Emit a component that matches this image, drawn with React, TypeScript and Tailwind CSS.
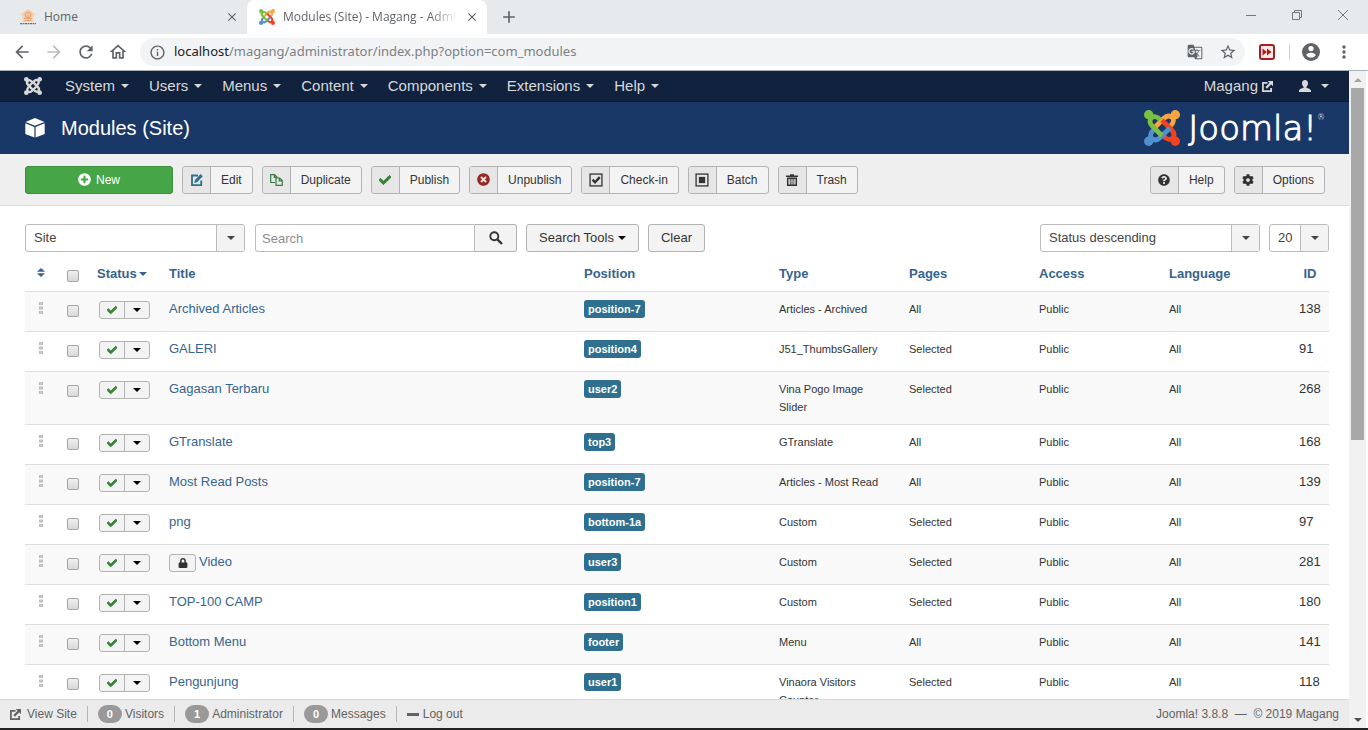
import React from "react";
import {
  MdArrowBack,
  MdArrowForward,
  MdRefresh,
  MdOutlineHome,
  MdInfoOutline,
  MdStarBorder,
  MdClose,
  MdAdd,
  MdMoreVert,
  MdGTranslate,
} from "react-icons/md";
import {
  FaCheck,
  FaPlusCircle,
  FaTimesCircle,
  FaQuestionCircle,
  FaCog,
  FaLock,
} from "react-icons/fa";

const joomlaArms = [
  { color: "#f9a541", turn: "rotate(90 18 18)" },
  { color: "#f44321", turn: "rotate(180 18 18)" },
  { color: "#5091cd", turn: "rotate(270 18 18)" },
  { color: "#7ac143", turn: "rotate(0 18 18)" },
];

function JoomlaMark({ className, mono = false }: { className: string; mono?: boolean }) {
  return (
    <svg className={className} viewBox="0 0 36 36" aria-hidden="true">
      {joomlaArms.map((arm) => {
        const color = mono ? "currentColor" : arm.color;
        return (
          <g key={arm.color} transform={arm.turn}>
            <circle cx="4.700" cy="4.700" r="4.700" fill={color} />
            <path
              d="M16.200 9.800C13.500 6.500 9.500 5.500 7.300 8 5 10.800 6 13.800 8.500 16.300L18 25.800"
              fill="none"
              stroke={color}
              strokeWidth="4.800"
            />
          </g>
        );
      })}
    </svg>
  );
}

function Caret({ className = "" }: { className?: string }) {
  return (
    <svg className={`h-1 w-2 shrink-0 ${className}`} viewBox="0 0 8 4" aria-hidden="true">
      <path d="M0 0h8L4 4z" fill="currentColor" />
    </svg>
  );
}

function ExternalIcon({ className }: { className: string }) {
  return (
    <svg className={className} viewBox="0 0 12 12" fill="none" stroke="currentColor" strokeWidth="1.900" aria-hidden="true">
      <path d="M6 2H1v9h9V7.500" />
      <path d="M4.500 7.500 10 2" strokeWidth="2.400" />
      <path d="M6.300 0H12v5.700z" fill="currentColor" stroke="none" />
    </svg>
  );
}

function PersonIcon() {
  return (
    <svg className="size-3" viewBox="0 0 12 12" fill="currentColor" aria-hidden="true">
      <path d="M6 0c2 0 3 1.300 3 3.200C9 5 8.200 6.200 7.400 6.900v.900C9 8.400 12 9 12 11v1H0v-1c0-2 3-2.600 4.600-3.200v-.9C3.800 6.200 3 5 3 3.200 3 1.300 4 0 6 0z" />
    </svg>
  );
}

function CubeIcon() {
  return (
    <svg className="size-5" viewBox="0 0 20 20" fill="currentColor" aria-hidden="true">
      <path d="M10 0 19.500 4 10 7.700.500 4z" />
      <path d="M.300 5.200 9.400 8.900V19.500L.300 16z" />
      <path d="M19.700 5.200 10.600 8.900V19.500L19.700 16z" />
    </svg>
  );
}

function EditIcon() {
  return (
    <svg className="size-3 text-[#2f6f8f]" viewBox="0 0 12 12" fill="none" stroke="currentColor" strokeWidth="1.800" aria-hidden="true">
      <path d="M7 1.500H1v9.600h9.200V6.500" />
      <path d="M3.300 8.900 4 6 9.600.100l2.200 2.200-5.800 6z" fill="currentColor" stroke="none" />
    </svg>
  );
}

function DuplicateIcon() {
  return (
    <svg className="h-3 w-[13px] text-[#3a7d44]" viewBox="0 0 13 12" fill="none" stroke="currentColor" strokeWidth="1.200" aria-hidden="true">
      <path d="M5 8.500H.700V.700h3.800L7 3v1" />
      <path d="M4.300.700v2.600H7" />
      <path d="M6 4h3.600l2.700 2.600v4.800H6z" fill="#e6e6e6" />
      <path d="M9.300 4v2.900h3" />
    </svg>
  );
}

function CheckinIcon() {
  return (
    <svg className="size-[14px] text-[#333]" viewBox="0 0 13 13" fill="none" stroke="currentColor" aria-hidden="true">
      <rect x="1" y="1" width="11" height="11" strokeWidth="1.200" />
      <path d="M3.300 6.200 5.600 8.600 10 3.800" strokeWidth="2.200" />
    </svg>
  );
}

function BatchIcon() {
  return (
    <svg className="size-[14px] text-[#333]" viewBox="0 0 13 13" aria-hidden="true">
      <rect x="1" y="1" width="11" height="11" fill="none" stroke="currentColor" strokeWidth="1.200" />
      <rect x="3.600" y="3.600" width="5.800" height="5.800" fill="currentColor" />
    </svg>
  );
}

function TrashIcon() {
  return (
    <svg className="size-3 text-[#333]" viewBox="0 0 12 12" fill="none" stroke="currentColor" aria-hidden="true">
      <path d="M0 2.200h12M4 1h4" strokeWidth="1.600" />
      <path d="M1.700 4.200v7h8.600v-7z" strokeWidth="1.500" />
      <path d="M4.300 4v7M6 4v7M7.800 4v7" strokeWidth="0.800" />
    </svg>
  );
}

function SearchIcon() {
  return (
    <svg className="size-[14px] text-[#333]" viewBox="0 0 14 14" fill="none" stroke="currentColor" aria-hidden="true">
      <circle cx="5.300" cy="5.300" r="4" strokeWidth="1.900" />
      <path d="m8.300 8.300 4.700 4.700" strokeWidth="2.400" />
    </svg>
  );
}

function HomeFavicon() {
  return (
    <svg className="size-4" viewBox="0 0 16 16" aria-hidden="true">
      <path d="M8 0c3 1 4 3 7.500 5.500L13.500 7v6h-11V7L.500 5.500C4 3 5 1 8 0z" fill="#f6cfae" />
      <circle cx="8" cy="5.800" r="2.800" fill="none" stroke="#e8a678" strokeWidth="1.200" />
      <path d="M4 9.500h8M4.500 11.500h7M8 3v9" stroke="#e8a678" strokeWidth="1" />
      <path d="M0 14.700h16" stroke="#7d6f68" strokeWidth="1.200" strokeDasharray="2 .5" />
    </svg>
  );
}

function BrowserChrome() {
  return (
    <header className="shrink-0 border-b border-[#a9b0b5] bg-white font-['Open_Sans',sans-serif] text-[#5f6368]">
      <div className="flex h-[34px] items-stretch bg-[#e6eaed]">
        <div className="flex w-[247px] items-center gap-2 pr-2 pl-5 text-xs">
          <HomeFavicon />
          <span className="flex-1">Home</span>
          <button aria-label="Close Home tab">
            <MdClose className="size-[14px]" />
          </button>
        </div>
        <div className="flex w-[240px] items-center gap-2 rounded-t-lg bg-white pr-2 pl-3 text-xs">
          <JoomlaMark className="size-4 shrink-0" />
          <span className="min-w-0 flex-1 overflow-hidden mask-r-from-85% whitespace-nowrap">
            Modules (Site) - Magang - Administration
          </span>
          <button aria-label="Close Modules tab">
            <MdClose className="size-[14px]" />
          </button>
        </div>
        <button aria-label="New tab" className="ml-3">
          <MdAdd className="size-5" />
        </button>
        <div className="ml-auto flex items-center gap-9 pr-5 pb-1 text-[#777]">
          <button aria-label="Minimize">
            <svg className="size-[10px]" viewBox="0 0 10 10" stroke="currentColor">
              <path d="M0 5.500h10" />
            </svg>
          </button>
          <button aria-label="Restore">
            <svg className="size-[10px]" viewBox="0 0 10 10" fill="none" stroke="currentColor">
              <path d="M.500 2.500h7v7h-7zM2.500 2.500v-2h7v7h-2" />
            </svg>
          </button>
          <button aria-label="Close window">
            <svg className="size-[10px]" viewBox="0 0 10 10" stroke="currentColor">
              <path d="m0 0 10 10M10 0 0 10" />
            </svg>
          </button>
        </div>
      </div>
      <div className="flex h-9 items-center pr-[14px] pl-3">
        <div className="flex items-center gap-3">
          <button aria-label="Back">
            <MdArrowBack className="size-5" />
          </button>
          <button aria-label="Forward" className="text-[#b9bcbf]">
            <MdArrowForward className="size-5" />
          </button>
          <button aria-label="Reload">
            <MdRefresh className="size-5" />
          </button>
          <button aria-label="Home page">
            <MdOutlineHome className="size-5" />
          </button>
        </div>
        <div className="ml-3 flex h-7 flex-1 items-center rounded-full bg-[#f1f3f4] pr-2 pl-[9px]">
          <MdInfoOutline className="mr-2 size-[17px]" />
          <span className="flex-1 font-['Noto_Sans',sans-serif] text-[13px]">
            <span className="text-[#202124]">localhost</span>
            <span className="text-[#7b8085]">/magang/administrator/index.php?option=com_modules</span>
          </span>
          <button aria-label="Translate">
            <MdGTranslate className="size-4" />
          </button>
          <button aria-label="Bookmark" className="ml-4">
            <MdStarBorder className="size-[18px]" />
          </button>
        </div>
        <div className="flex items-center pl-[14px]">
          <button aria-label="Extension">
            <svg className="size-4" viewBox="0 0 16 16" aria-hidden="true">
              <rect x="1" y="1" width="14" height="14" rx="2" fill="#fbe9e7" stroke="#a31f24" strokeWidth="2" />
              <path d="M3.500 4.500 8 8l-4.500 3.500zM8 4.500 12.500 8 8 11.500z" fill="#b3161c" />
            </svg>
          </button>
          <span className="mr-3 ml-[14px] h-4 w-px bg-[#cfd2d5]" />
          <button aria-label="Profile">
            <svg className="size-[18px]" viewBox="0 0 18 18" aria-hidden="true">
              <circle cx="9" cy="9" r="9" fill="currentColor" />
              <circle cx="9" cy="5.600" r="2.600" fill="#fff" />
              <path d="M4.300 12.300c0-1.700 3-2.600 4.700-2.600s4.700.900 4.700 2.600c-1 1.500-2.700 2.300-4.700 2.300s-3.700-.8-4.700-2.300z" fill="#fff" />
            </svg>
          </button>
          <button aria-label="Browser menu" className="ml-[14px]">
            <MdMoreVert className="size-5" />
          </button>
        </div>
      </div>
    </header>
  );
}

const menus = ["System", "Users", "Menus", "Content", "Components", "Extensions", "Help"];

function NavBar() {
  return (
    <nav className="flex h-[31px] items-center border-b border-[#0c192e] bg-[#10223e] pr-5 pl-6 text-[15px] text-[#d9d9d9]">
      <a href="#home" aria-label="Control panel" className="mr-[13px] pb-px">
        <JoomlaMark mono className="size-[18px]" />
      </a>
      {menus.map((name) => (
        <button key={name} className="flex items-center gap-[6px] px-[10px]">
          {name}
          <Caret />
        </button>
      ))}
      <a href="#site" className="ml-auto flex items-center gap-1">
        Magang
        <ExternalIcon className="size-[11px]" />
      </a>
      <button aria-label="User menu" className="ml-[26px] flex items-center gap-[10px]">
        <PersonIcon />
        <Caret />
      </button>
    </nav>
  );
}

function TitleBar() {
  return (
    <div className="flex h-[52px] items-center bg-[#1a3867] pr-6 pl-[25px] text-white">
      <CubeIcon />
      <h1 className="ml-4 text-xl">Modules (Site)</h1>
      <div className="ml-auto flex items-center gap-2">
        <JoomlaMark className="size-9" />
        <span className="flex items-start font-['DejaVu_Sans',sans-serif] text-[34px] leading-9 font-extralight [-webkit-text-stroke:1px_white]">
          Joomla!<span className="pt-1 text-[8px] leading-none [-webkit-text-stroke:0px]">®</span>
        </span>
      </div>
    </div>
  );
}

function ToolButton({ icon, label }: { icon: React.ReactNode; label: string }) {
  return (
    <button className="flex h-7 items-stretch overflow-hidden rounded-[3px] border border-[#b3b3b3] bg-[#f3f3f3]">
      <span className="flex w-7 items-center justify-center border-r border-[#b3b3b3] bg-[#e6e6e6]">{icon}</span>
      <span className="self-center px-[10px]">{label}</span>
    </button>
  );
}

function Toolbar() {
  return (
    <div className="flex h-[52px] items-center gap-[9px] border-b border-[#ddd] bg-[#efefef] pr-6 pl-[25px] text-xs text-[#333]">
      <button className="flex h-7 w-[148px] items-center justify-center gap-[5px] rounded-[3px] border border-[#3c8d3c] bg-[#46a546] text-white">
        <FaPlusCircle className="size-[13px]" />
        New
      </button>
      <ToolButton icon={<EditIcon />} label="Edit" />
      <ToolButton icon={<DuplicateIcon />} label="Duplicate" />
      <ToolButton icon={<FaCheck strokeWidth="40" className="size-3 text-[#378137]" />} label="Publish" />
      <ToolButton icon={<FaTimesCircle className="size-[13px] text-[#942a25]" />} label="Unpublish" />
      <ToolButton icon={<CheckinIcon />} label="Check-in" />
      <ToolButton icon={<BatchIcon />} label="Batch" />
      <ToolButton icon={<TrashIcon />} label="Trash" />
      <div className="ml-auto flex gap-[9px]">
        <ToolButton icon={<FaQuestionCircle className="size-3" />} label="Help" />
        <ToolButton icon={<FaCog className="size-3" />} label="Options" />
      </div>
    </div>
  );
}

function SelectBox({ label, value, className }: { label: string; value: string; className: string }) {
  return (
    <div className={`flex h-7 rounded-[3px] border border-[#bbb] bg-white ${className}`}>
      <select
        aria-label={label}
        className="h-full min-w-0 flex-1 appearance-none pl-2 text-[#444] outline-none"
        defaultValue={value}
      >
        <option>{value}</option>
      </select>
      <span className="flex w-7 items-center justify-center rounded-r-[2px] border-l border-[#bbb] bg-[#f3f3f3] text-[#444]">
        <Caret />
      </span>
    </div>
  );
}

function Filters() {
  return (
    <div className="flex items-center px-[25px] pr-5 text-[13px] text-[#333]">
      <SelectBox label="Client" value="Site" className="w-[220px]" />
      <input
        type="text"
        aria-label="Search modules"
        placeholder="Search"
        className="ml-[10px] h-7 w-[220px] rounded-l-[3px] border border-[#bbb] px-[6px] outline-none placeholder:text-[#8c8c8c]"
      />
      <button
        aria-label="Search"
        className="flex h-7 w-[42px] items-center justify-center rounded-r-[3px] border border-l-0 border-[#b3b3b3] bg-[#f3f3f3]"
      >
        <SearchIcon />
      </button>
      <button className="ml-[9px] flex h-7 items-center gap-1 rounded-[3px] border border-[#b3b3b3] bg-[#f3f3f3] px-3">
        Search Tools
        <Caret className="text-black" />
      </button>
      <button className="ml-[9px] h-7 rounded-[3px] border border-[#b3b3b3] bg-[#f3f3f3] px-3">Clear</button>
      <SelectBox label="Order" value="Status descending" className="ml-auto w-[220px]" />
      <SelectBox label="Page size" value="20" className="ml-[9px] w-[60px]" />
    </div>
  );
}

type Row = { title: string; position: string; type: string; pages: string; id: number; locked?: boolean };

const rows: Row[] = [
  { title: "Archived Articles", position: "position-7", type: "Articles - Archived", pages: "All", id: 138 },
  { title: "GALERI", position: "position4", type: "J51_ThumbsGallery", pages: "Selected", id: 91 },
  { title: "Gagasan Terbaru", position: "user2", type: "Vina Pogo Image Slider", pages: "Selected", id: 268 },
  { title: "GTranslate", position: "top3", type: "GTranslate", pages: "All", id: 168 },
  { title: "Most Read Posts", position: "position-7", type: "Articles - Most Read", pages: "All", id: 139 },
  { title: "png", position: "bottom-1a", type: "Custom", pages: "Selected", id: 97 },
  { title: "Video", position: "user3", type: "Custom", pages: "Selected", id: 281, locked: true },
  { title: "TOP-100 CAMP", position: "position1", type: "Custom", pages: "Selected", id: 180 },
  { title: "Bottom Menu", position: "footer", type: "Menu", pages: "All", id: 141 },
  { title: "Pengunjung", position: "user1", type: "Vinaora Visitors Counter", pages: "Selected", id: 118 },
];

function CheckBox({ label }: { label: string }) {
  return (
    <input
      type="checkbox"
      aria-label={label}
      className="mx-auto block size-3 appearance-none rounded-[2px] border border-[#a5a5a5] bg-linear-to-b from-[#efefef] to-[#d9d9d9]"
    />
  );
}

function ModuleTable() {
  return (
    <table className="w-full table-fixed border-collapse text-left text-[13px] leading-[18px] text-[#333]">
      <colgroup>
        <col className="w-8" />
        <col className="w-8" />
        <col className="w-[72px]" />
        <col />
        <col className="w-[195px]" />
        <col className="w-[130px]" />
        <col className="w-[130px]" />
        <col className="w-[130px]" />
        <col className="w-[130px]" />
        <col className="w-[38px]" />
      </colgroup>
      <thead>
        <tr className="h-[37px] align-top text-[#36648f] *:px-2 *:pt-[11px]">
          <th>
            <button aria-label="Sort by ordering" className="mx-auto block pt-[3px]">
              <svg className="h-[9px] w-2" viewBox="0 0 8 9" fill="currentColor" aria-hidden="true">
                <path d="M4 0l4 3.700H0zM0 5.300h8L4 9z" />
              </svg>
            </button>
          </th>
          <th className="pt-4!">
            <CheckBox label="Check all items" />
          </th>
          <th>
            <a href="#status" className="flex items-center gap-[2px]">
              Status
              <Caret />
            </a>
          </th>
          <th><a href="#title">Title</a></th>
          <th><a href="#position">Position</a></th>
          <th><a href="#type">Type</a></th>
          <th><a href="#pages">Pages</a></th>
          <th><a href="#access">Access</a></th>
          <th><a href="#language">Language</a></th>
          <th className="text-center"><a href="#id">ID</a></th>
        </tr>
      </thead>
      <tbody>
        {rows.map((row) => (
          <tr
            key={row.id}
            className="h-10 border-t border-[#ddd] align-top odd:bg-[#f9f9f9] *:px-2 *:pt-2 *:pb-2"
          >
            <td>
              <svg className="mx-auto mt-[2px] h-3 w-[4px] text-[#bbb]" viewBox="0 0 4 12" fill="currentColor" aria-hidden="true">
                <path d="M0 0h4v3H0zM0 4.500h4v3H0zM0 9h4v3H0z" />
                <path d="M2 0v12" stroke="#e0e0e0" strokeWidth=".6" />
              </svg>
            </td>
            <td className="pt-[13px]!">
              <CheckBox label={`Select ${row.title}`} />
            </td>
            <td className="px-[10px]!">
              <div className="mt-px flex h-[18px] w-[51px] divide-x divide-[#b3b3b3] rounded-[3px] border border-[#b3b3b3] bg-[#f3f3f3]">
                <button aria-label="Unpublish" className="flex flex-1 items-center justify-center text-[#378137]">
                  <FaCheck strokeWidth="50" className="size-[10px]" />
                </button>
                <button aria-label="Actions" className="flex flex-1 items-center justify-center text-black">
                  <Caret />
                </button>
              </div>
            </td>
            <td>
              <div className="flex gap-[3px]">
                {row.locked && (
                  <button
                    aria-label="Check in module"
                    className="mt-px flex h-[18px] w-[27px] items-center justify-center rounded-[3px] border border-[#b3b3b3] bg-[#f3f3f3]"
                  >
                    <FaLock className="size-[10px]" />
                  </button>
                )}
                <a href="#module" className="text-[#36648f]">{row.title}</a>
              </div>
            </td>
            <td>
              <span className="inline-block rounded-[3px] bg-[#2f6f8f] px-1 align-top text-[11px] font-bold text-white">
                {row.position}
              </span>
            </td>
            <td className="text-[11px] leading-[18px]">{row.type}</td>
            <td className="text-[11px] leading-[18px]">{row.pages}</td>
            <td className="text-[11px] leading-[18px]">Public</td>
            <td className="text-[11px] leading-[18px]">All</td>
            <td>{row.id}</td>
          </tr>
        ))}
      </tbody>
    </table>
  );
}

const counters = [
  { count: 0, label: "Visitors" },
  { count: 1, label: "Administrator" },
  { count: 0, label: "Messages" },
];

function StatusBar() {
  return (
    <footer className="flex h-[29px] shrink-0 items-center border-t border-[#d8d8d8] bg-[#ebebeb] px-[10px] text-xs text-[#626262]">
      <div className="flex items-center divide-x divide-[#b5b5b5] leading-4">
        <a href="#site" className="flex items-center gap-[6px] pr-[10px]">
          <ExternalIcon className="size-[11px]" />
          View Site
        </a>
        {counters.map((c) => (
          <span key={c.label} className="flex h-4 items-center gap-[3px] px-[10px]">
            <span className="rounded-full bg-[#999] px-[9px] py-px text-[11px] font-bold text-white">{c.count}</span>
            {c.label}
          </span>
        ))}
        <a href="#logout" className="flex items-center gap-1 pl-[10px]">
          <span className="h-[3px] w-3 bg-[#626262]" />
          Log out
        </a>
      </div>
      <p className="ml-auto whitespace-pre">Joomla! 3.8.8  —  © 2019 Magang</p>
    </footer>
  );
}

function ScrollBar() {
  return (
    <div className="flex w-[19px] shrink-0 flex-col items-center border-r-2 border-white bg-[#f1f1f1]" aria-hidden="true">
      <span className="flex h-[17px] items-center">
        <Caret className="rotate-180 text-[#a3a3a3]" />
      </span>
      <span className="w-full flex-1 px-[2px]">
        <span className="block h-[56.5%] bg-[#a8a8a8]" />
      </span>
      <span className="flex h-[17px] items-center">
        <Caret className="text-[#505050]" />
      </span>
    </div>
  );
}

export default function App() {
  return (
    <div className="flex h-screen flex-col border-b-2 border-[#222] bg-white">
      <BrowserChrome />
      <div className="flex min-h-0 flex-1 font-['Liberation_Sans',Arial,sans-serif]">
        <div className="flex min-w-0 flex-1 flex-col">
          <NavBar />
          <TitleBar />
          <Toolbar />
          <main className="min-h-0 flex-1 overflow-hidden pt-[18px]">
            <Filters />
            <div className="pt-[2px] pr-5 pl-[25px]">
              <ModuleTable />
            </div>
          </main>
          <StatusBar />
        </div>
        <ScrollBar />
      </div>
    </div>
  );
}
